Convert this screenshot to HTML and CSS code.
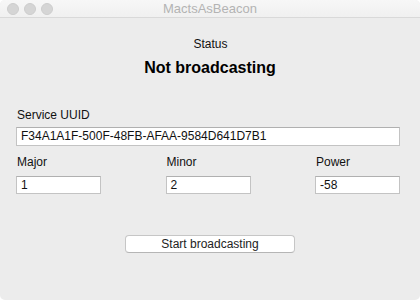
FILE: index.html
```html
<!DOCTYPE html>
<html lang="en">
<head>
    <meta charset="UTF-8">
    <meta name="viewport" content="width=device-width, initial-scale=1.0">
    <title>MactsAsBeacon</title>
    <link rel="stylesheet" href="styles.css">
</head>
<body>
    <div class="window">
        <header class="titlebar">
            <div class="lights">
                <span class="light"></span>
                <span class="light"></span>
                <span class="light"></span>
            </div>
            <div class="title">MactsAsBeacon</div>
        </header>

        <section class="status">
            <p class="status-label">Status</p>
            <h1 class="status-value">Not broadcasting</h1>
        </section>

        <main class="form">
            <label class="field-label">Service UUID</label>
            <div class="field wide">F34A1A1F-500F-48FB-AFAA-9584D641D7B1</div>

            <div class="field-row">
                <div class="field-col">
                    <label class="field-label">Major</label>
                    <div class="field">1</div>
                </div>
                <div class="field-col">
                    <label class="field-label">Minor</label>
                    <div class="field">2</div>
                </div>
                <div class="field-col">
                    <label class="field-label">Power</label>
                    <div class="field">-58</div>
                </div>
            </div>
        </main>

        <footer class="actions">
            <button class="button">Start broadcasting</button>
        </footer>
    </div>
</body>
</html>
```

FILE: styles.css
```css
* {
    margin: 0;
    padding: 0;
    box-sizing: border-box;
}

body {
    font-family: 'Liberation Sans', Arial, sans-serif;
    background: #ffffff;
    color: #111;
    width: 420px;
    height: 300px;
    overflow: hidden;
}

.window {
    width: 420px;
    height: 300px;
    background: #ececec;
    border-radius: 5px;
    overflow: hidden;
}

.titlebar {
    height: 18px;
    display: grid;
    grid-template-columns: 1fr auto 1fr;
    align-items: center;
    background: linear-gradient(#f7f7f7, #f0f0f0);
    border-bottom: 1px solid #d9d9d9;
}

.lights {
    display: flex;
    gap: 5px;
    padding-left: 7px;
}

.light {
    width: 12px;
    height: 12px;
    border-radius: 50%;
    background: #d5d5d5;
    border: 1px solid #cdcdcd;
}

.title {
    font-size: 13px;
    color: #b3b3b3;
}

.status {
    text-align: center;
    padding-top: 19px;
}

.status-label {
    font-size: 12px;
    line-height: 14px;
    padding-left: 1px;
}

.status-value {
    font-size: 16px;
    line-height: 20px;
    font-weight: bold;
    margin-top: 7px;
    color: #000;
}

.form {
    padding: 30px 20px 0 16px;
}

.field-label {
    display: block;
    font-size: 12px;
    line-height: 14px;
    padding-left: 1px;
}

.field {
    margin-top: 5px;
    height: 18px;
    background: #ffffff;
    border: 1px solid #c3c3c3;
    border-top-color: #b0b0b0;
    font-size: 12px;
    line-height: 16px;
    padding-left: 4px;
}

.field.wide {
    height: 19px;
    line-height: 17px;
}

.field-row {
    display: flex;
    justify-content: space-between;
    margin-top: 9px;
}

.field-col {
    width: 85px;
}

.field-col .field {
    margin-top: 7px;
}

.actions {
    display: flex;
    justify-content: center;
    padding-top: 41px;
}

.button {
    width: 170px;
    height: 18px;
    font-family: inherit;
    font-size: 12px;
    color: #222;
    background: #ffffff;
    border: 1px solid #c6c6c6;
    border-bottom-color: #b5b5b5;
    border-radius: 4px;
}
```
